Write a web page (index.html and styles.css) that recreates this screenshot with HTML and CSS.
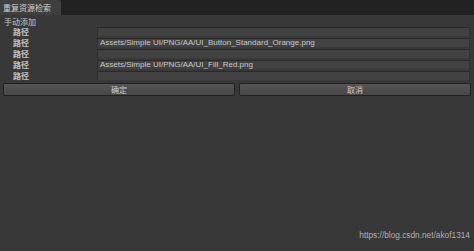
FILE: index.html
```html
<!DOCTYPE html>
<html>
<head>
<meta charset="utf-8">
<link rel="stylesheet" href="styles.css">
</head>
<body>
<div class="window">
  <div class="tabbar">
    <div class="tab">重复资源检索</div>
  </div>
  <div class="content">
    <div class="section">手动添加</div>
    <div class="rows">
      <div class="row"><span class="label">路径</span><div class="field"></div></div>
      <div class="row"><span class="label">路径</span><div class="field">Assets/Simple UI/PNG/AA/UI_Button_Standard_Orange.png</div></div>
      <div class="row"><span class="label">路径</span><div class="field"></div></div>
      <div class="row"><span class="label">路径</span><div class="field">Assets/Simple UI/PNG/AA/UI_Fill_Red.png</div></div>
      <div class="row"><span class="label">路径</span><div class="field"></div></div>
    </div>
    <div class="buttons">
      <div class="btn">确定</div>
      <div class="btn">取消</div>
    </div>
    <div class="spacer"></div>
    <div class="watermark">https://blog.csdn.net/akof1314</div>
  </div>
</div>
</body>
</html>
```
FILE: styles.css
```css
html, body {
  margin: 0;
  padding: 0;
  background: #383838;
}
.window {
  width: 474px;
  height: 251px;
  display: flex;
  flex-direction: column;
  font-family: "Liberation Sans", "Noto Sans CJK SC", sans-serif;
  color: #c8c8c8;
}
.tabbar {
  height: 15px;
  background: #222222;
  display: flex;
  align-items: flex-end;
}
.tab {
  width: 61px;
  height: 15px;
  background: #3f3f3f;
  border-top-right-radius: 2px;
  font-family: "Noto Sans CJK SC", sans-serif;
  font-size: 8px;
  line-height: 15px;
  padding-left: 3px;
  color: #d2d2d2;
  box-sizing: border-box;
}
.content {
  flex: 1;
  display: flex;
  flex-direction: column;
  background: #383838;
}
.section {
  font-family: "Noto Sans CJK SC", sans-serif;
  font-size: 8px;
  line-height: 11px;
  padding-left: 4px;
  margin-top: 1px;
}
.rows {
  display: flex;
  flex-direction: column;
  gap: 1px;
}
.row {
  display: flex;
  align-items: center;
  height: 10px;
}
.label {
  width: 97px;
  padding-left: 13px;
  box-sizing: border-box;
  font-family: "Noto Sans CJK SC", sans-serif;
  font-size: 8px;
  font-weight: bold;
  line-height: 10px;
  color: #c4c4c4;
}
.field {
  flex: none;
  width: 373px;
  height: 10px;
  box-sizing: border-box;
  background: #424242;
  border-top: 1px solid #2a2a2a;
  border-left: 1px solid #2e2e2e;
  border-right: 1px solid #303030;
  border-bottom: 1px solid #3a3a3a;
  font-size: 8px;
  line-height: 8px;
  padding-left: 2px;
  color: #c8c8c8;
  white-space: nowrap;
  overflow: hidden;
}
.buttons {
  display: flex;
  gap: 4px;
  padding: 0 3px 0 3px;
  margin-top: 2px;
}
.btn {
  flex: 1;
  height: 13px;
  box-sizing: border-box;
  background: linear-gradient(#555555, #474747);
  border: 1px solid #222222;
  border-radius: 2px;
  text-align: center;
  font-family: "Noto Sans CJK SC", sans-serif;
  font-size: 8px;
  line-height: 11px;
  color: #cfcfcf;
}
.spacer {
  flex: 1;
}
.watermark {
  align-self: flex-end;
  padding-right: 4px;
  margin-bottom: 11px;
  font-size: 8.3px;
  line-height: 10px;
  color: #b0b0b0;
}
```
